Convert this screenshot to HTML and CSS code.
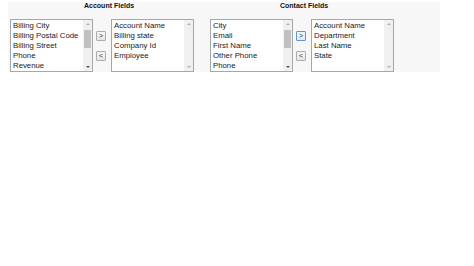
FILE: index.html
```html
<!DOCTYPE html>
<html>
<head>
<meta charset="utf-8">
<link rel="stylesheet" href="styles.css">
</head>
<body>
<div class="panel">
  <div class="section">
    <div class="heading heading-account">Account Fields</div>
    <div class="row">
      <div class="listbox">
        <div class="items">
          <div class="item">Billing City</div>
          <div class="item">Billing Postal Code</div>
          <div class="item">Billing Street</div>
          <div class="item">Phone</div>
          <div class="item">Revenue</div>
        </div>
        <div class="scroll">
          <div class="arrow up off"></div>
          <div class="track"><div class="thumb"></div></div>
          <div class="arrow down"></div>
        </div>
      </div>
      <div class="buttons">
        <div class="btn btn-add">&gt;</div>
        <div class="btn btn-remove">&lt;</div>
      </div>
      <div class="listbox">
        <div class="items">
          <div class="item">Account Name</div>
          <div class="item">Billing state</div>
          <div class="item">Company Id</div>
          <div class="item">Employee</div>
        </div>
        <div class="scroll">
          <div class="arrow up off"></div>
          <div class="track"></div>
          <div class="arrow down off"></div>
        </div>
      </div>
    </div>
  </div>
  <div class="section">
    <div class="heading heading-contact">Contact Fields</div>
    <div class="row">
      <div class="listbox">
        <div class="items">
          <div class="item">City</div>
          <div class="item">Email</div>
          <div class="item">First Name</div>
          <div class="item">Other Phone</div>
          <div class="item">Phone</div>
        </div>
        <div class="scroll">
          <div class="arrow up off"></div>
          <div class="track"><div class="thumb"></div></div>
          <div class="arrow down"></div>
        </div>
      </div>
      <div class="buttons">
        <div class="btn btn-add btn-focus">&gt;</div>
        <div class="btn btn-remove">&lt;</div>
      </div>
      <div class="listbox">
        <div class="items">
          <div class="item">Account Name</div>
          <div class="item">Department</div>
          <div class="item">Last Name</div>
          <div class="item">State</div>
        </div>
        <div class="scroll">
          <div class="arrow up off"></div>
          <div class="track"></div>
          <div class="arrow down off"></div>
        </div>
      </div>
    </div>
  </div>
</div>
</body>
</html>
```
FILE: styles.css
```css
html, body {
  margin: 0;
  padding: 0;
  background: #ffffff;
}
body {
  font-family: "Liberation Sans", Arial, sans-serif;
  color: #222222;
}
.panel {
  margin: 2px 0 0 8px;
  width: 430px;
  height: 70px;
  padding-left: 2px;
  background: #f7f7f7;
  display: flex;
  gap: 16px;
}
.section {
  display: flex;
  flex-direction: column;
  width: 184px;
}
.heading {
  font-size: 7px;
  font-weight: bold;
  line-height: 8px;
  height: 8px;
  margin-bottom: 9px;
  color: #111;
  white-space: nowrap;
}
.heading-account { padding-left: 74px; }
.heading-contact { padding-left: 70px; }
.row {
  display: flex;
}
.listbox {
  width: 83px;
  height: 53px;
  box-sizing: border-box;
  border: 1px solid #a7a7a7;
  background: #ffffff;
  display: flex;
}
.items {
  flex: 1;
  padding: 1px 0 0 2px;
  overflow: hidden;
}
.item {
  font-size: 7.8px;
  line-height: 10px;
  height: 10px;
  white-space: nowrap;
  color: #1a1a1a;
}
.scroll {
  width: 9px;
  background: #f0f0f0;
  display: flex;
  flex-direction: column;
}
.arrow {
  height: 8px;
  display: flex;
  align-items: center;
  justify-content: center;
}
.arrow::before {
  content: "";
  width: 0;
  height: 0;
  border-left: 2px solid transparent;
  border-right: 2px solid transparent;
}
.up::before { border-bottom: 2px solid #505050; }
.down::before { border-top: 2px solid #505050; }
.up.off::before { border-bottom-color: #b0b0b0; }
.down.off::before { border-top-color: #b0b0b0; }
.track {
  flex: 1;
  padding: 2px 1px 0 1px;
}
.thumb {
  height: 18px;
  background: #c1c1c1;
}
.buttons {
  width: 18px;
  display: flex;
  flex-direction: column;
  align-items: flex-start;
  padding: 12px 0 0 3px;
  box-sizing: border-box;
  gap: 10px;
}
.btn {
  width: 10px;
  height: 10px;
  box-sizing: border-box;
  border: 1px solid #adadad;
  border-radius: 1px;
  background: linear-gradient(#f7f7f7, #e4e4e4);
  font-size: 7px;
  line-height: 8px;
  text-align: center;
  color: #333;
}
.btn-focus {
  border-color: #5f95d4;
  background: linear-gradient(#eef6fd, #dcecfc);
}
```
